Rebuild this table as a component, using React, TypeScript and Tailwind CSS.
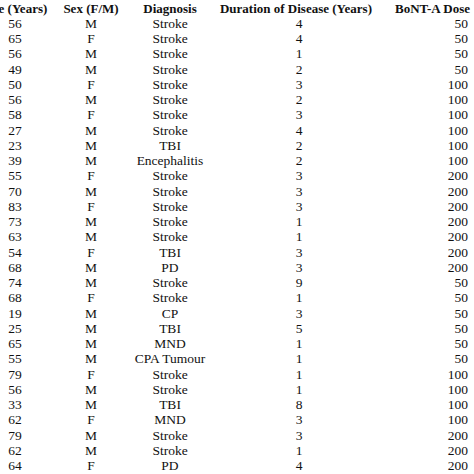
import React from "react";

const rows: [string, string, string, string, string][] = [
  ["56", "M", "Stroke", "4", "50"],
  ["65", "F", "Stroke", "4", "50"],
  ["56", "M", "Stroke", "1", "50"],
  ["49", "M", "Stroke", "2", "50"],
  ["50", "F", "Stroke", "3", "100"],
  ["56", "M", "Stroke", "2", "100"],
  ["58", "F", "Stroke", "3", "100"],
  ["27", "M", "Stroke", "4", "100"],
  ["23", "M", "TBI", "2", "100"],
  ["39", "M", "Encephalitis", "2", "100"],
  ["55", "F", "Stroke", "3", "200"],
  ["70", "M", "Stroke", "3", "200"],
  ["83", "F", "Stroke", "3", "200"],
  ["73", "M", "Stroke", "1", "200"],
  ["63", "M", "Stroke", "1", "200"],
  ["54", "F", "TBI", "3", "200"],
  ["68", "M", "PD", "3", "200"],
  ["74", "M", "Stroke", "9", "50"],
  ["68", "F", "Stroke", "1", "50"],
  ["19", "M", "CP", "3", "50"],
  ["25", "M", "TBI", "5", "50"],
  ["65", "M", "MND", "1", "50"],
  ["55", "M", "CPA Tumour", "1", "50"],
  ["79", "F", "Stroke", "1", "100"],
  ["56", "M", "Stroke", "1", "100"],
  ["33", "M", "TBI", "8", "100"],
  ["62", "F", "MND", "3", "100"],
  ["79", "M", "Stroke", "3", "200"],
  ["62", "M", "Stroke", "1", "200"],
  ["64", "F", "PD", "4", "200"],
];

const grid = "grid grid-cols-[74px_78px_80px_178px_86px] items-center";

export default function App() {
  return (
    <div className="w-[474px] h-[474px] overflow-hidden bg-white text-[#111] font-['Liberation_Serif','Times_New_Roman',serif]">
      <div className="ml-[-22px] w-[496px]">
        <div className={`${grid} h-[16px] text-[13px] font-bold leading-none whitespace-nowrap`}>
          <div className="text-center">Age (Years)</div>
          <div className="text-center">Sex (F/M)</div>
          <div className="text-center">Diagnosis</div>
          <div className="text-center pr-[6px]">Duration of Disease (Years)</div>
          <div className="text-right pr-[4px]">BoNT-A Dose</div>
        </div>
        {rows.map((r, i) => (
          <div key={i} className={`${grid} h-[15.25px] text-[13.5px] leading-none whitespace-nowrap`}>
            <div className="text-center">{r[0]}</div>
            <div className="text-center">{r[1]}</div>
            <div className="text-center">{r[2]}</div>
            <div className="text-center">{r[3]}</div>
            <div className="text-right pr-[6px]">{r[4]}</div>
          </div>
        ))}
      </div>
    </div>
  );
}
